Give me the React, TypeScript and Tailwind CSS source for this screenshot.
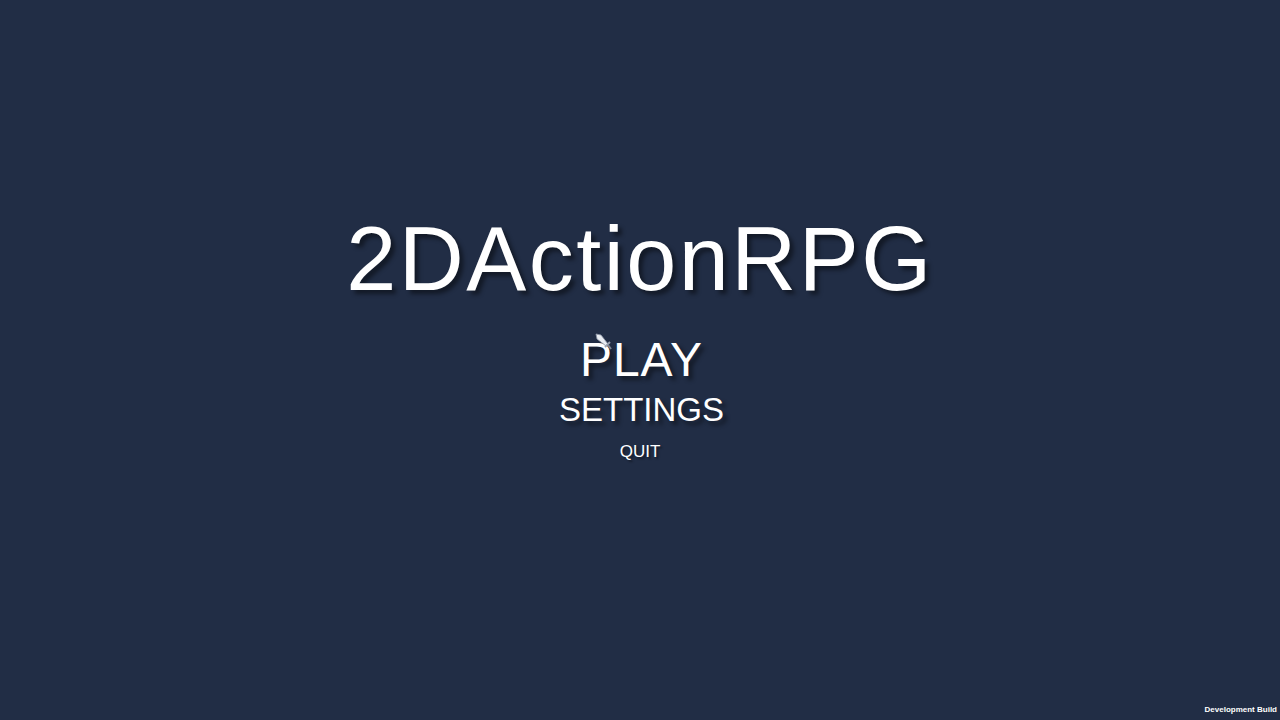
import React from 'react';

const shadow = '[text-shadow:4px_4px_4px_rgba(0,0,0,0.45)]';

export default function App() {
  return (
    <div className="relative h-[720px] w-[1280px] overflow-hidden bg-[#212d45] font-['Liberation_Sans',Arial,sans-serif] text-white">
      <div className="flex flex-col items-center pt-[208px]">
        <h1 className={`text-[90px] leading-[102px] tracking-[2.5px] ${shadow}`}>2DActionRPG</h1>
        <div className="mt-[22px] flex flex-col items-center">
          <div className="relative">
            <button className={`ml-[3px] text-[48px] leading-[56px] tracking-[1px] ${shadow}`}>PLAY</button>
            {/* sword cursor */}
            <svg className="absolute left-[18px] top-[1px]" width="18" height="20" viewBox="0 0 18 20">
              <path d="M1 1 L6 2 L13 11 L11 13 L2 6 Z" fill="#e8ecf2" stroke="#8a93a3" strokeWidth="0.8" />
              <path d="M10 14 L15 9" stroke="#9aa2b0" strokeWidth="2" />
              <path d="M13 12 L16 16" stroke="#7c8594" strokeWidth="2" />
            </svg>
          </div>
          <button className={`mt-[2px] ml-[3px] text-[33px] leading-[40px] ${shadow}`}>SETTINGS</button>
          <button className={`mt-[10px] text-[17px] leading-[24px] [text-shadow:2px_2px_2px_rgba(0,0,0,0.4)]`}>QUIT</button>
        </div>
      </div>
      <div className="absolute bottom-[4px] right-[3px] text-[8px] font-bold leading-[12px] text-white">
        Development Build
      </div>
    </div>
  );
}
